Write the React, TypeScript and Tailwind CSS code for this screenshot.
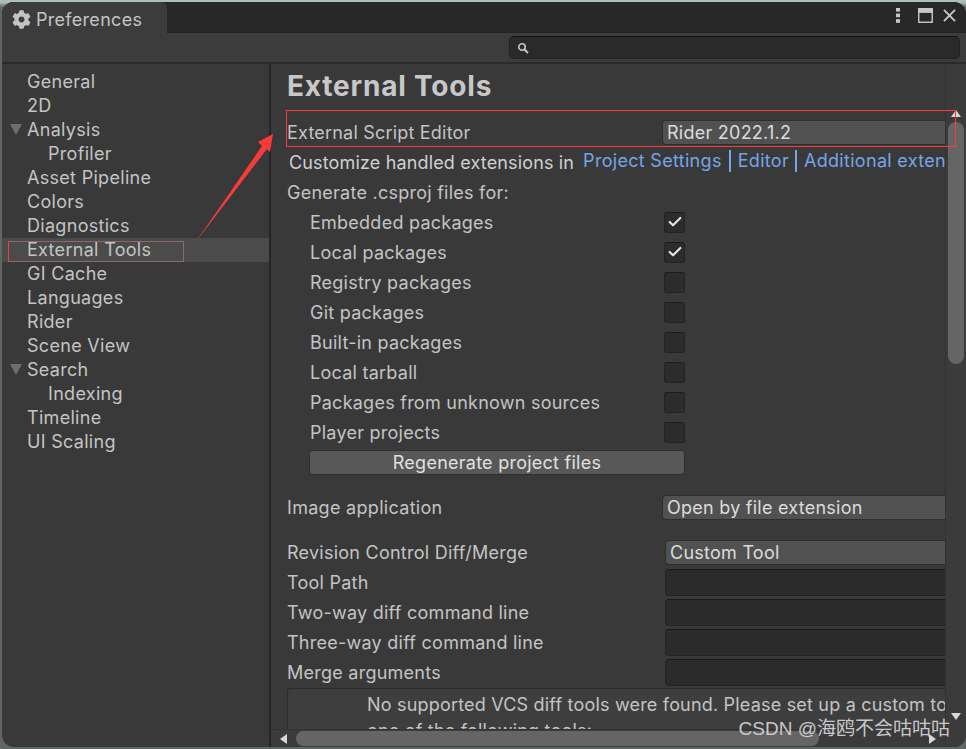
import { Check } from "lucide-react";
import { FaCog } from "react-icons/fa";

const sidebarItems = [
  { label: "General" },
  { label: "2D" },
  { label: "Analysis", open: true },
  { label: "Profiler", nested: true },
  { label: "Asset Pipeline" },
  { label: "Colors" },
  { label: "Diagnostics" },
  { label: "External Tools", selected: true },
  { label: "GI Cache" },
  { label: "Languages" },
  { label: "Rider" },
  { label: "Scene View" },
  { label: "Search", open: true },
  { label: "Indexing", nested: true },
  { label: "Timeline" },
  { label: "UI Scaling" },
];

const packages = [
  { label: "Embedded packages", checked: true },
  { label: "Local packages", checked: true },
  { label: "Registry packages" },
  { label: "Git packages" },
  { label: "Built-in packages" },
  { label: "Local tarball" },
  { label: "Packages from unknown sources" },
  { label: "Player projects" },
];

const diffFields = ["Tool Path", "Two-way diff command line", "Three-way diff command line", "Merge arguments"];

function SidebarRow({ label, open, nested, selected }: { label: string; open?: boolean; nested?: boolean; selected?: boolean }) {
  return (
    <div className={`relative h-6 pb-[2px] flex items-center text-[18px] tracking-[0.3px] ${selected ? "bg-[#4b4b4b]" : ""} ${nested ? "pl-[46px]" : "pl-[25px]"}`}>
      {open && <span className="absolute left-[8px] top-[6px] w-0 h-0 border-x-[6px] border-x-transparent border-t-[11px] border-t-[#6e6e6e]" />}
      {label}
    </div>
  );
}

function Dropdown({ text }: { text: string }) {
  return (
    <div className="h-[25px] flex items-center flex-1 bg-[#515151] border border-[#2e2e2e] border-r-0 rounded-l-[4px] text-[#dcdcdc] text-[18px] tracking-[0.25px] whitespace-nowrap pl-[4px]">
      {text}
    </div>
  );
}

function Field() {
  return <div className="h-[27px] flex-1 bg-[#2b2b2b] border border-[#242424] border-t-[#191919] border-r-0 rounded-l-[4px]" />;
}

export default function App() {
  return (
    <div className="w-[966px] h-[749px] overflow-hidden relative bg-gradient-to-b from-[#aebfba] from-[0.3%] to-[#5f6664] to-[1%] font-['Inter','Noto_Sans_CJK_SC',sans-serif]">
      <div className="h-[745px] flex flex-col rounded-[12px] overflow-hidden ml-[2px] mt-[2px] bg-[#393939] text-[#c4c4c4]">
        {/* title bar */}
        <div className="h-[31px] shrink-0 flex bg-[#282828] border-b border-[#232323]">
          <div className="w-[165px] h-[31px] pt-[3px] bg-[#3c3c3c] rounded-tr-[6px] flex items-center pl-[10px] gap-[5px] text-[18px] tracking-[0.3px] text-[#c4c4c4]">
            <FaCog size={19} className="text-[#c4c4c4]" />
            Preferences
          </div>
          <div className="flex-1 flex items-start pt-[6px] justify-end pr-[10px]">
            <svg width="6" height="15" viewBox="0 0 6 15" className="fill-[#c8c8c8] mr-[17px]">
              <rect x="1" y="0" width="4" height="3.6" />
              <rect x="1" y="5.6" width="4" height="3.6" />
              <rect x="1" y="11.2" width="4" height="3.6" />
            </svg>
            <svg width="15" height="15" viewBox="0 0 15 15" fill="none" className="stroke-[#c8c8c8] mr-[10px]">
              <rect x="0.75" y="0.75" width="13.5" height="13.5" strokeWidth="1.4" />
              <rect x="0.75" y="0.75" width="13.5" height="3.6" fill="#c8c8c8" strokeWidth="1" />
            </svg>
            <svg width="13" height="13" viewBox="0 0 14 14" fill="none" className="stroke-[#c8c8c8] mt-[1px]">
              <path d="M1 1 L13 13 M13 1 L1 13" strokeWidth="2" />
            </svg>
          </div>
        </div>
        {/* search toolbar */}
        <div className="h-[31px] shrink-0 flex items-center justify-end pr-[6px] bg-[#3c3c3c] border-b-2 border-[#2a2a2a]">
          <div className="w-[451px] h-[23px] bg-[#2a2a2a] border border-[#212121] border-t-[#111111] rounded-[5px] flex items-center pl-[7px]">
            <svg width="12" height="12" viewBox="0 0 12 12" fill="none" className="stroke-[#c4c4c4]">
              <circle cx="5" cy="5" r="3.2" strokeWidth="1.6" />
              <path d="M7.5 7.5 L11 11" strokeWidth="2" />
            </svg>
          </div>
        </div>
        <div className="flex-1 min-h-0 flex">
          {/* sidebar */}
          <div className="w-[267px] shrink-0 pt-[6px]">
            {sidebarItems.map((item) => (
              <SidebarRow key={item.label} {...item} />
            ))}
          </div>
          <div className="w-[2px] shrink-0 bg-[#252525]" />
          {/* main panel */}
          <div className="flex-1 min-w-0 flex">
            <div className="flex-1 min-w-0 flex flex-col">
              <div className="flex-1 min-h-0 overflow-hidden pl-[16px]">
                <h1 className="h-[43px] flex items-center text-[28px] leading-none font-bold tracking-[0.8px] text-[#c8c8c8]">External Tools</h1>
                <div className="h-[30px] mt-[10px] flex items-center">
                  <span className="w-[375px] shrink-0 text-[18px] tracking-[0.2px]">External Script Editor</span>
                  <Dropdown text="Rider 2022.1.2" />
                </div>
                <div className="h-[30px] flex items-center pl-[2px] text-[18px] tracking-[0.15px] whitespace-nowrap overflow-hidden">
                  <span className="text-[#d0d0d0] mr-[9px]">Customize handled extensions in</span>
                  <div className="flex items-center text-[#76a5e8] mt-[-3px] tracking-[0.3px]">
                    <span className="pr-[7px] border-r-2 border-[#76a5e8] leading-[22px]">Project Settings</span>
                    <span className="pl-[7px] pr-[6px] border-r-2 border-[#76a5e8] leading-[22px]">Editor</span>
                    <span className="pl-[7px] leading-[22px]">Additional exten</span>
                  </div>
                </div>
                <div className="h-[30px] flex items-center text-[18px] tracking-[0.25px]">Generate .csproj files for:</div>
                {packages.map((p) => (
                  <div key={p.label} className="h-[30px] flex items-center pl-[23px] text-[18px] tracking-[0.25px]">
                    <span className="w-[354px] shrink-0">{p.label}</span>
                    <span className="w-[21px] h-[21px] bg-[#2c2c2c] border border-[#232323] border-t-[#1c1c1c] rounded-[3px] flex items-center justify-center">
                      {p.checked && <Check size={16} strokeWidth={3.2} className="text-[#e4e4e4]" />}
                    </span>
                  </div>
                ))}
                <div className="h-[30px] flex items-center pl-[22px]">
                  <div className="w-[376px] shrink-0 h-[25px] bg-[#585858] border border-[#2f2f2f] rounded-[4px] flex items-center justify-center text-[18px] tracking-[0.25px] text-[#e0e0e0]">
                    Regenerate project files
                  </div>
                </div>
                <div className="h-[30px] mt-[15px] flex items-center">
                  <span className="w-[375px] shrink-0 text-[18px] tracking-[0.3px]">Image application</span>
                  <Dropdown text="Open by file extension" />
                </div>
                <div className="h-[30px] mt-[15px] flex items-center">
                  <span className="w-[378px] shrink-0 text-[18px] tracking-[0.25px]">Revision Control Diff/Merge</span>
                  <Dropdown text="Custom Tool" />
                </div>
                {diffFields.map((f) => (
                  <div key={f} className="h-[30px] flex items-center">
                    <span className="w-[378px] shrink-0 text-[18px] tracking-[0.25px]">{f}</span>
                    <Field />
                  </div>
                ))}
                <div className="mt-[1px] h-[60px] pt-[3px] bg-[#3e3e3e] border border-[#2b2b2b] border-r-0 rounded-tl-[4px] pl-[79px] text-[18px] leading-[26px] tracking-[0.19px] whitespace-nowrap overflow-hidden">
                  <div>No supported VCS diff tools were found. Please set up a custom to</div>
                  <div>one of the following tools:</div>
                </div>
              </div>
              {/* horizontal scrollbar */}
              <div className="h-[18px] shrink-0 flex items-center bg-[#3b3b3b] border-t border-[#323232]">
                <span className="ml-[9px] mr-[9px] w-0 h-0 border-y-[5px] border-y-transparent border-r-[7px] border-r-[#d8d8d8]" />
                <div className="w-[523px] h-[15px] rounded-full bg-[#656565]" />
                <span className="ml-auto mr-[9px] w-0 h-0 border-y-[5px] border-y-transparent border-l-[7px] border-l-[#d8d8d8]" />
              </div>
            </div>
            {/* vertical scrollbar */}
            <div className="w-[21px] shrink-0 flex flex-col items-center pt-[46px] bg-[#3b3b3b] border-l border-[#323232]">
              <span className="w-0 h-0 border-x-[5px] border-x-transparent border-b-[7px] border-b-[#d8d8d8]" />
              <div className="mt-[5px] w-[16px] h-[242px] rounded-full bg-[#656565]" />
              <span className="mt-auto mb-[27px] w-0 h-0 border-x-[5px] border-x-transparent border-t-[7px] border-t-[#d8d8d8]" />
            </div>
          </div>
        </div>
      </div>

      {/* red annotations */}
      <div className="absolute left-[286px] top-[110px] w-[670px] h-[37px] border border-[#fc3a3a]" />
      <div className="absolute left-[8px] top-[241px] w-[176px] h-[21px] border border-[#fc3a3a] border-r-[#8a6a6a] border-b-[#8a6a6a] border-t-[#8a6a6a]" />
      <svg width="100" height="125" viewBox="0 0 100 125" className="absolute left-[190px] top-[125px]">
        <path d="M5 118 L72 21 L68 17 L83 9 L80 27 L77 24 Z" fill="#f93a3a" />
      </svg>
      {/* watermark */}
      <div className="absolute right-[16px] bottom-[8px] text-[19px] leading-[24px] text-[#c9c9c9] font-['Liberation_Sans','Noto_Sans_CJK_SC',sans-serif]">
        CSDN @海鸥不会咕咕咕
      </div>
    </div>
  );
}
